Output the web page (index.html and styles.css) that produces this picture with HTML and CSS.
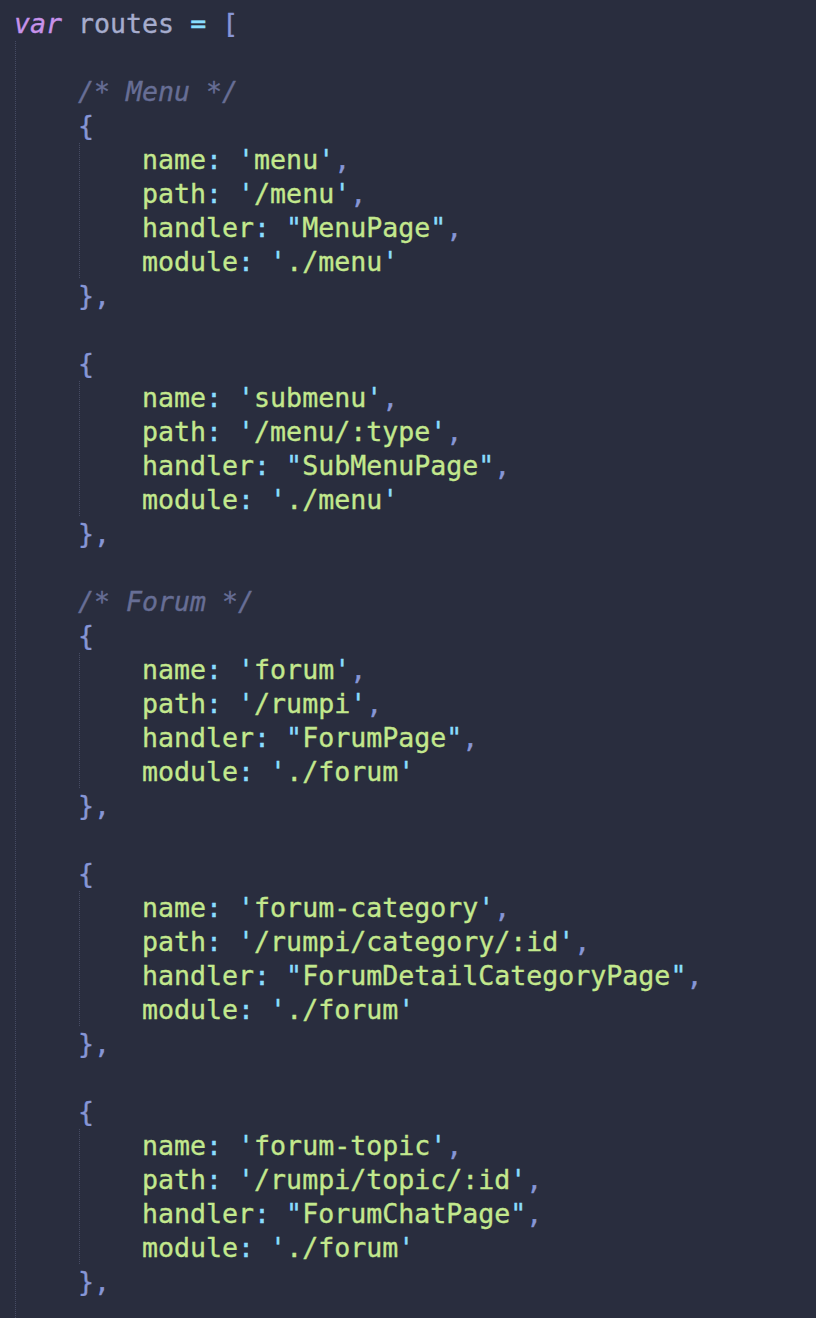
FILE: index.html
```html
<!DOCTYPE html>
<html>
<head>
<meta charset="utf-8">
<link rel="stylesheet" href="styles.css">
</head>
<body>
<div class="editor">
<div class="ln"><span class="kw">var</span> <span class="id">routes</span> <span class="op">=</span> <span class="br">[</span></div>
<div class="ln"><span class="ind g"></span></div>
<div class="ln"><span class="ind g"></span><span class="cm">/* Menu */</span></div>
<div class="ln"><span class="ind g"></span><span class="br">{</span></div>
<div class="ln"><span class="ind g"></span><span class="ind g"></span><span class="k">name</span><span class="op">:</span> <span class="q">'</span><span class="s">menu</span><span class="q">'</span><span class="p">,</span></div>
<div class="ln"><span class="ind g"></span><span class="ind g"></span><span class="k">path</span><span class="op">:</span> <span class="q">'</span><span class="s">/menu</span><span class="q">'</span><span class="p">,</span></div>
<div class="ln"><span class="ind g"></span><span class="ind g"></span><span class="k">handler</span><span class="op">:</span> <span class="q">"</span><span class="s">MenuPage</span><span class="q">"</span><span class="p">,</span></div>
<div class="ln"><span class="ind g"></span><span class="ind g"></span><span class="k">module</span><span class="op">:</span> <span class="q">'</span><span class="s">./menu</span><span class="q">'</span></div>
<div class="ln"><span class="ind g"></span><span class="br">}</span><span class="p">,</span></div>
<div class="ln"><span class="ind g"></span></div>
<div class="ln"><span class="ind g"></span><span class="br">{</span></div>
<div class="ln"><span class="ind g"></span><span class="ind g"></span><span class="k">name</span><span class="op">:</span> <span class="q">'</span><span class="s">submenu</span><span class="q">'</span><span class="p">,</span></div>
<div class="ln"><span class="ind g"></span><span class="ind g"></span><span class="k">path</span><span class="op">:</span> <span class="q">'</span><span class="s">/menu/:type</span><span class="q">'</span><span class="p">,</span></div>
<div class="ln"><span class="ind g"></span><span class="ind g"></span><span class="k">handler</span><span class="op">:</span> <span class="q">"</span><span class="s">SubMenuPage</span><span class="q">"</span><span class="p">,</span></div>
<div class="ln"><span class="ind g"></span><span class="ind g"></span><span class="k">module</span><span class="op">:</span> <span class="q">'</span><span class="s">./menu</span><span class="q">'</span></div>
<div class="ln"><span class="ind g"></span><span class="br">}</span><span class="p">,</span></div>
<div class="ln"><span class="ind g"></span></div>
<div class="ln"><span class="ind g"></span><span class="cm">/* Forum */</span></div>
<div class="ln"><span class="ind g"></span><span class="br">{</span></div>
<div class="ln"><span class="ind g"></span><span class="ind g"></span><span class="k">name</span><span class="op">:</span> <span class="q">'</span><span class="s">forum</span><span class="q">'</span><span class="p">,</span></div>
<div class="ln"><span class="ind g"></span><span class="ind g"></span><span class="k">path</span><span class="op">:</span> <span class="q">'</span><span class="s">/rumpi</span><span class="q">'</span><span class="p">,</span></div>
<div class="ln"><span class="ind g"></span><span class="ind g"></span><span class="k">handler</span><span class="op">:</span> <span class="q">"</span><span class="s">ForumPage</span><span class="q">"</span><span class="p">,</span></div>
<div class="ln"><span class="ind g"></span><span class="ind g"></span><span class="k">module</span><span class="op">:</span> <span class="q">'</span><span class="s">./forum</span><span class="q">'</span></div>
<div class="ln"><span class="ind g"></span><span class="br">}</span><span class="p">,</span></div>
<div class="ln"><span class="ind g"></span></div>
<div class="ln"><span class="ind g"></span><span class="br">{</span></div>
<div class="ln"><span class="ind g"></span><span class="ind g"></span><span class="k">name</span><span class="op">:</span> <span class="q">'</span><span class="s">forum-category</span><span class="q">'</span><span class="p">,</span></div>
<div class="ln"><span class="ind g"></span><span class="ind g"></span><span class="k">path</span><span class="op">:</span> <span class="q">'</span><span class="s">/rumpi/category/:id</span><span class="q">'</span><span class="p">,</span></div>
<div class="ln"><span class="ind g"></span><span class="ind g"></span><span class="k">handler</span><span class="op">:</span> <span class="q">"</span><span class="s">ForumDetailCategoryPage</span><span class="q">"</span><span class="p">,</span></div>
<div class="ln"><span class="ind g"></span><span class="ind g"></span><span class="k">module</span><span class="op">:</span> <span class="q">'</span><span class="s">./forum</span><span class="q">'</span></div>
<div class="ln"><span class="ind g"></span><span class="br">}</span><span class="p">,</span></div>
<div class="ln"><span class="ind g"></span></div>
<div class="ln"><span class="ind g"></span><span class="br">{</span></div>
<div class="ln"><span class="ind g"></span><span class="ind g"></span><span class="k">name</span><span class="op">:</span> <span class="q">'</span><span class="s">forum-topic</span><span class="q">'</span><span class="p">,</span></div>
<div class="ln"><span class="ind g"></span><span class="ind g"></span><span class="k">path</span><span class="op">:</span> <span class="q">'</span><span class="s">/rumpi/topic/:id</span><span class="q">'</span><span class="p">,</span></div>
<div class="ln"><span class="ind g"></span><span class="ind g"></span><span class="k">handler</span><span class="op">:</span> <span class="q">"</span><span class="s">ForumChatPage</span><span class="q">"</span><span class="p">,</span></div>
<div class="ln"><span class="ind g"></span><span class="ind g"></span><span class="k">module</span><span class="op">:</span> <span class="q">'</span><span class="s">./forum</span><span class="q">'</span></div>
<div class="ln"><span class="ind g"></span><span class="br">}</span><span class="p">,</span></div>
<div class="ln"><span class="ind g"></span></div>
</div>
</body>
</html>
```

FILE: styles.css
```css
html, body {
  margin: 0;
  padding: 0;
  background: #292d3e;
}
body {
  height: 1318px;
  overflow: hidden;
}
.editor {
  padding: 7px 0 0 14px;
  font-family: "DejaVu Sans Mono", "Liberation Mono", monospace;
  font-size: 26.6px;
  color: #a6accd;
  -webkit-text-stroke: 0.35px;
}
.ln {
  height: 34px;
  line-height: 34px;
  white-space: pre;
}
.ind {
  display: inline-block;
  width: 64px;
  height: 34px;
  vertical-align: top;
}
.g {
  background-image: repeating-linear-gradient(to bottom, #464b63 0 1px, transparent 1px 2px);
  background-size: 1px 100%;
  background-position: 1px 0;
  background-repeat: no-repeat;
}
.kw { color: #c792ea; font-style: italic; }
.id { color: #a6accd; }
.op { color: #89ddff; }
.br { color: #8796d6; }
.p { color: #8796d6; }
.cm { color: #676e95; font-style: italic; }
.k { color: #c3e88d; }
.s { color: #c3e88d; }
.q { color: #89ddff; }
```
